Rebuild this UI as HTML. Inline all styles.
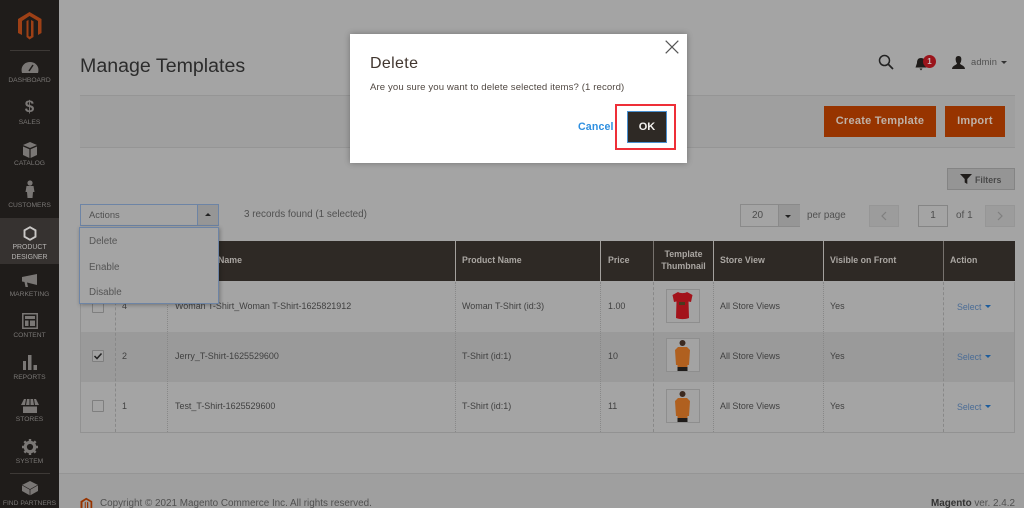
<!DOCTYPE html>
<html><head><meta charset="utf-8"><style>
html,body{margin:0;padding:0;width:1024px;height:508px;overflow:hidden;background:#a4a4a4}
#r{position:relative;width:1024px;height:508px;overflow:hidden;background:#a4a4a4;font-family:"Liberation Sans",sans-serif;color:#444}
.a,.t,svg.i{position:absolute}
.t{white-space:nowrap;font-size:9px;line-height:12px}
.n{left:0;width:59px;text-align:center;font-size:6.7px;line-height:9px;color:#7a7775}
.h{color:#aaa6a2;font-weight:bold;font-size:8.8px}
.c{color:#404040;font-size:8.95px}
.sel{color:#4a6c96;font-size:8.8px}
.v{top:282px;height:150px;width:0;border-left:1px dashed #888}
.hv{top:241px;height:40px;width:1px;background:#a3a09d}
.cb{left:92px;width:10px;height:10px;border:1px solid #7f7f7f;background:#a4a4a4;border-radius:1px}
.th{left:666px;width:32px;height:32px;border:1px solid #8e8e8e;background:#a3a3a3}
</style></head><body><div id="r">

<!-- sidebar -->
<div class="a" style="left:0;top:0;width:59px;height:508px;background:#1f1c1a"></div>
<div class="a" style="left:0;top:218px;width:59px;height:46px;background:#363230"></div>
<div class="a" style="left:10px;top:50px;width:40px;height:1px;background:#3d3936"></div>
<div class="a" style="left:10px;top:473px;width:40px;height:1px;background:#3d3936"></div>
<svg class="i" style="left:17px;top:11px" width="26" height="29" viewBox="0 0 26 29"><path d="M12.5 1 L24.5 8 V22 L21 24 V10 L12.5 5 L5 10 V24 L1 22 V8 Z M9.5 10 L11.5 9 V25 L12.5 25.6 L14 25 V9 L16.5 10.3 V26 L12.5 28.5 L9.5 26 Z" fill="#9d4016"/></svg>

<svg class="i" style="left:21px;top:61px" width="18" height="13" viewBox="0 0 18 13"><path d="M1 12 C-1 5 4 1 9 1 C14 1 19 5 17 12 Z" fill="#7a7775"/><path d="M8 10 L12 4" stroke="#1f1c1a" stroke-width="1.5"/></svg>
<div class="t n" style="top:76px">DASHBOARD</div>
<div class="t" style="left:0;width:59px;top:98px;text-align:center;font-size:17px;line-height:18px;font-weight:bold;color:#7a7775">$</div>
<div class="t n" style="top:118px">SALES</div>
<svg class="i" style="left:22px;top:142px" width="16" height="16" viewBox="0 0 16 16"><path d="M8 0 L15 3 L8 6 L1 3 Z M1 4.5 L7.4 7.3 V16 L1 13 Z M8.6 7.3 L15 4.5 V13 L8.6 16 Z" fill="#7a7775"/></svg>
<div class="t n" style="top:159px">CATALOG</div>
<svg class="i" style="left:25px;top:180px" width="10" height="18" viewBox="0 0 10 18"><circle cx="5" cy="3" r="2.6" fill="#7a7775"/><path d="M1.5 6 H8.5 L9.5 12 H8 L7.5 18 H2.5 L2 12 H.5 Z" fill="#7a7775"/></svg>
<div class="t n" style="top:201px">CUSTOMERS</div>
<svg class="i" style="left:23px;top:226px" width="14" height="15" viewBox="0 0 14 15"><path d="M7 1.2 L12.5 4.3 V10.7 L7 13.8 L1.5 10.7 V4.3 Z" fill="none" stroke="#c9c7c5" stroke-width="1.9"/></svg>
<div class="t n" style="top:243px;color:#b5b3b1;font-size:6.9px;line-height:10px">PRODUCT<br>DESIGNER</div>
<svg class="i" style="left:22px;top:274px" width="16" height="14" viewBox="0 0 16 14"><path d="M0 3 L15 0 V11 L5 8.5 L6 13 H3.5 L2.5 8 L0 7.5 Z" fill="#7a7775"/></svg>
<div class="t n" style="top:290px">MARKETING</div>
<svg class="i" style="left:22px;top:313px" width="16" height="16" viewBox="0 0 16 16"><path d="M.8.8 H15.2 V15.2 H.8 Z" fill="none" stroke="#7a7775" stroke-width="1.5"/><path d="M3 3 H13 V6 H3 Z M3 7.5 H6.5 V13 H3 Z M8 7.5 H13 V13 H8 Z" fill="#7a7775"/></svg>
<div class="t n" style="top:331px">CONTENT</div>
<svg class="i" style="left:23px;top:355px" width="14" height="15" viewBox="0 0 14 15"><path d="M0 6 H3 V15 H0 Z M5 0 H8.5 V15 H5 Z M10.5 10 H14 V15 H10.5 Z" fill="#7a7775"/></svg>
<div class="t n" style="top:373px">REPORTS</div>
<svg class="i" style="left:21px;top:399px" width="18" height="14" viewBox="0 0 18 14"><path d="M3 0 H15 L18 6 H0 Z M2 7.5 H16 V14 H2 Z" fill="#7a7775"/><path d="M5.5 0 L4.5 6 M9 0 V6 M12.5 0 L13.5 6" stroke="#1f1c1a"/></svg>
<div class="t n" style="top:415px">STORES</div>
<svg class="i" style="left:22px;top:439px" width="16" height="16" viewBox="0 0 16 16"><circle cx="8" cy="8" r="4.7" fill="none" stroke="#7a7775" stroke-width="3.2"/><path d="M8 0 V16 M0 8 H16 M2.3 2.3 L13.7 13.7 M13.7 2.3 L2.3 13.7" stroke="#7a7775" stroke-width="2.4" stroke-dasharray="2.6 10.8"/></svg>
<div class="t n" style="top:457px">SYSTEM</div>
<svg class="i" style="left:21px;top:480px" width="18" height="16" viewBox="0 0 18 16"><path d="M9 1 L17 5 V11 L9 15.5 L1 11 V5 Z" fill="#7a7775"/><path d="M1 5 L9 9.5 L17 5 M9 9.5 V15.5" stroke="#1f1c1a" stroke-width=".7" fill="none"/></svg>
<div class="t n" style="top:499px">FIND PARTNERS</div>

<!-- header -->
<div class="t" style="left:80px;top:54px;font-size:19.6px;line-height:24px;color:#2c2c2c">Manage Templates</div>
<svg class="i" style="left:878px;top:54px" width="16" height="16" viewBox="0 0 16 16"><circle cx="6.5" cy="6.5" r="5" fill="none" stroke="#222" stroke-width="1.5"/><path d="M10.2 10.2 L15 15" stroke="#222" stroke-width="1.7"/></svg>
<svg class="i" style="left:915px;top:57px" width="12" height="14" viewBox="0 0 12 14"><path d="M6 1 C9 1 10 3 10 6 L11.5 10.5 H.5 L2 6 C2 3 3 1 6 1 Z M4.5 11.5 H7.5 L6 13.5 Z" fill="#1f1c1a"/></svg>
<div class="a" style="left:923px;top:55px;width:13px;height:13px;border-radius:50%;background:#9a141b;color:#c9b9b9;font-size:8px;font-weight:bold;line-height:13px;text-align:center">1</div>
<svg class="i" style="left:952px;top:56px" width="13" height="13" viewBox="0 0 13 13"><path d="M6.5 0 C9 0 9.5 2 9.3 4 C9.1 6 8.3 7 8 7.5 C8.2 9 13 9.5 13 13 H0 C0 9.5 4.8 9 5 7.5 C4.7 7 3.9 6 3.7 4 C3.5 2 4 0 6.5 0 Z" fill="#1f1c1a"/></svg>
<div class="t" style="left:971px;top:56px;font-size:9.3px;color:#505050;letter-spacing:.15px">admin</div>
<div class="a" style="left:1001px;top:61px;border:3px solid transparent;border-top-color:#333;border-bottom:0"></div>

<!-- toolbar band -->
<div class="a" style="left:80px;top:95px;width:935px;height:53px;background:#9f9f9f;border-top:1px solid #959595;border-bottom:1px solid #959595;box-sizing:border-box"></div>
<div class="a" style="left:824px;top:106px;width:112px;height:31px;background:#973400"></div>
<div class="t" style="left:824px;top:115px;width:112px;text-align:center;font-size:11px;line-height:13px;font-weight:bold;color:#bfb2a8;letter-spacing:.25px">Create Template</div>
<div class="a" style="left:945px;top:106px;width:60px;height:31px;background:#973400"></div>
<div class="t" style="left:945px;top:115px;width:60px;text-align:center;font-size:11px;line-height:13px;font-weight:bold;color:#bfb2a8;letter-spacing:.25px">Import</div>

<div class="a" style="left:947px;top:168px;width:68px;height:22px;background:#959595;border:1px solid #848484;box-sizing:border-box"></div>
<svg class="i" style="left:960px;top:174px" width="12" height="10" viewBox="0 0 12 10"><path d="M0 0 H12 L7.3 5 V10 L4.7 8.5 V5 Z" fill="#1f1c1a"/></svg>
<div class="t" style="left:975px;top:174px;font-size:8.8px;font-weight:bold;color:#4a4a4a">Filters</div>

<!-- actions -->
<div class="a" style="left:80px;top:204px;width:139px;height:22px;border:1px solid #6d84a5;box-sizing:border-box;background:#a4a4a4"></div>
<div class="a" style="left:197px;top:205px;width:1px;height:20px;background:#6d84a5"></div>
<div class="a" style="left:198px;top:205px;width:20px;height:20px;background:#969696"></div>
<div class="a" style="left:205px;top:213px;border:3px solid transparent;border-bottom-color:#222;border-top:0"></div>
<div class="t c" style="left:89px;top:209px;font-size:9.4px;color:#505050">Actions</div>
<div class="t" style="left:244px;top:209px;font-size:9.9px;color:#505050">3 records found (1 selected)</div>

<!-- pager -->
<div class="a" style="left:740px;top:204px;width:60px;height:23px;background:#a4a4a4;border:1px solid #8a8a8a;box-sizing:border-box"></div>
<div class="a" style="left:778px;top:205px;width:21px;height:21px;background:#969696;border-left:1px solid #8a8a8a"></div>
<div class="a" style="left:785px;top:215px;border:3px solid transparent;border-top-color:#222;border-bottom:0"></div>
<div class="t" style="left:752px;top:210px;font-size:10px;color:#4c4c4c">20</div>
<div class="t" style="left:807px;top:210px;font-size:9.8px;color:#505050">per page</div>
<div class="a" style="left:869px;top:205px;width:30px;height:22px;background:#9c9c9c;border:1px solid #969696;box-sizing:border-box"></div>
<svg class="i" style="left:880px;top:211px" width="7" height="10" viewBox="0 0 7 10"><path d="M6 1 L2 5 L6 9" fill="none" stroke="#7f7f7f" stroke-width="1.2"/></svg>
<div class="a" style="left:918px;top:205px;width:30px;height:22px;background:#a4a4a4;border:1px solid #858585;box-sizing:border-box"></div>
<div class="t" style="left:918px;top:210px;width:30px;text-align:center;font-size:10px;color:#4c4c4c">1</div>
<div class="t" style="left:956px;top:210px;font-size:10px;color:#505050">of 1</div>
<div class="a" style="left:985px;top:205px;width:30px;height:22px;background:#9c9c9c;border:1px solid #969696;box-sizing:border-box"></div>
<svg class="i" style="left:997px;top:211px" width="7" height="10" viewBox="0 0 7 10"><path d="M1 1 L5 5 L1 9" fill="none" stroke="#7f7f7f" stroke-width="1.2"/></svg>

<!-- table -->
<div class="a" style="left:80px;top:282px;width:935px;height:151px;border:1px solid #929292;border-top:0;box-sizing:border-box"></div>
<div class="a" style="left:81px;top:332px;width:933px;height:50px;background:#9a9a9a"></div>
<div class="a" style="left:80px;top:241px;width:935px;height:40px;background:#2e2925"></div>
<div class="a hv" style="left:167px"></div><div class="a hv" style="left:455px"></div><div class="a hv" style="left:600px"></div><div class="a hv" style="left:653px;background:#77726e"></div><div class="a hv" style="left:713px"></div><div class="a hv" style="left:823px"></div><div class="a hv" style="left:943px;background:#77726e"></div>
<div class="a v" style="left:115px"></div><div class="a v" style="left:167px;border-left-style:dotted"></div><div class="a v" style="left:455px;border-left-style:dotted"></div><div class="a v" style="left:600px;border-left-style:dotted"></div><div class="a v" style="left:653px"></div><div class="a v" style="left:713px;border-left-style:dotted"></div><div class="a v" style="left:823px;border-left-style:dotted"></div><div class="a v" style="left:943px"></div>

<div class="t h" style="left:218px;top:254px">Name</div>
<div class="t h" style="left:462px;top:254px">Product Name</div>
<div class="t h" style="left:608px;top:254px">Price</div>
<div class="t h" style="left:654px;top:248px;width:59px;text-align:center;line-height:12px">Template<br>Thumbnail</div>
<div class="t h" style="left:720px;top:254px">Store View</div>
<div class="t h" style="left:830px;top:254px">Visible on Front</div>
<div class="t h" style="left:950px;top:254px">Action</div>

<!-- rows -->
<div class="a cb" style="top:301px"></div>
<div class="t c" style="left:122px;top:300px">4</div>
<div class="t c" style="left:175px;top:300px">Woman T-Shirt_Woman T-Shirt-1625821912</div>
<div class="t c" style="left:462px;top:300px">Woman T-Shirt (id:3)</div>
<div class="t c" style="left:608px;top:300px">1.00</div>
<div class="a th" style="top:289px"></div>
<svg class="i" style="left:672px;top:291px" width="21" height="29" viewBox="0 0 21 29"><path d="M6 1 C8 2.5 13 2.5 15 1 L20.5 4 L19 11 L16.5 10.5 L17 27 C13 28.5 8 28.5 4 27 L4.5 10.5 L2 11 L.5 4 Z" fill="#a3131b"/><path d="M7 11 H13 V14 H7 Z" fill="#4a3a20"/></svg>
<div class="t c" style="left:720px;top:300px">All Store Views</div>
<div class="t c" style="left:830px;top:300px">Yes</div>
<div class="t sel" style="left:957px;top:301px">Select</div>
<div class="a" style="left:985px;top:305px;border:3px solid transparent;border-top-color:#1c5c9c;border-bottom:0"></div>

<div class="a cb" style="top:350px;background:#a1a1a1"></div>
<svg class="i" style="left:93px;top:351px" width="10" height="10" viewBox="0 0 10 10"><path d="M1.5 5 L4 7.5 L8.5 2.5" fill="none" stroke="#222" stroke-width="1.5"/></svg>
<div class="t c" style="left:122px;top:350px">2</div>
<div class="t c" style="left:175px;top:350px">Jerry_T-Shirt-1625529600</div>
<div class="t c" style="left:462px;top:350px">T-Shirt (id:1)</div>
<div class="t c" style="left:608px;top:350px">10</div>
<div class="a th" style="top:338px"></div>
<svg class="i" style="left:674px;top:339px" width="17" height="33" viewBox="0 0 17 33"><circle cx="8.5" cy="4" r="3" fill="#3c2a20"/><path d="M4 8 H13 L16 11 L15 26 H13.5 V30 H3.5 V26 H2 L1 11 Z" fill="#b0601f"/><path d="M3.5 28 H13.5 V32 H3.5 Z" fill="#1f1c1a"/></svg>
<div class="t c" style="left:720px;top:350px">All Store Views</div>
<div class="t c" style="left:830px;top:350px">Yes</div>
<div class="t sel" style="left:957px;top:351px">Select</div>
<div class="a" style="left:985px;top:355px;border:3px solid transparent;border-top-color:#1c5c9c;border-bottom:0"></div>

<div class="a cb" style="top:400px"></div>
<div class="t c" style="left:122px;top:400px">1</div>
<div class="t c" style="left:175px;top:400px">Test_T-Shirt-1625529600</div>
<div class="t c" style="left:462px;top:400px">T-Shirt (id:1)</div>
<div class="t c" style="left:608px;top:400px">11</div>
<div class="a th" style="top:389px"></div>
<svg class="i" style="left:674px;top:390px" width="17" height="33" viewBox="0 0 17 33"><circle cx="8.5" cy="4" r="3" fill="#3c2a20"/><path d="M4 8 H13 L16 11 L15 26 H13.5 V30 H3.5 V26 H2 L1 11 Z" fill="#b0601f"/><path d="M3.5 28 H13.5 V32 H3.5 Z" fill="#1f1c1a"/></svg>
<div class="t c" style="left:720px;top:400px">All Store Views</div>
<div class="t c" style="left:830px;top:400px">Yes</div>
<div class="t sel" style="left:957px;top:401px">Select</div>
<div class="a" style="left:985px;top:405px;border:3px solid transparent;border-top-color:#1c5c9c;border-bottom:0"></div>

<!-- dropdown -->
<div class="a" style="left:79px;top:227px;width:140px;height:77px;background:#a4a4a4;border:1px solid #6d84a5;box-sizing:border-box;box-shadow:1px 1px 4px rgba(0,0,0,.3)"></div>
<div class="t" style="left:89px;top:236px;font-size:9.8px;color:#555">Delete</div>
<div class="t" style="left:89px;top:262px;font-size:9.8px;color:#555">Enable</div>
<div class="t" style="left:89px;top:287px;font-size:9.8px;color:#555">Disable</div>

<!-- footer -->
<div class="a" style="left:59px;top:473px;width:965px;height:35px;background:#9f9f9f;border-top:1px solid #959595;box-sizing:border-box"></div>
<svg class="i" style="left:80px;top:497px" width="13" height="15" viewBox="0 0 26 29"><path d="M12.5 1 L24.5 8 V22 L21 24 V10 L12.5 5 L5 10 V24 L1 22 V8 Z M9.5 10 L11.5 9 V25 L12.5 25.6 L14 25 V9 L16.5 10.3 V26 L12.5 28.5 L9.5 26 Z" fill="#973400"/></svg>
<div class="t" style="left:100px;top:498px;font-size:9.9px;color:#505050">Copyright © 2021 Magento Commerce Inc. All rights reserved.</div>
<div class="t" style="left:931px;top:498px;font-size:9.9px;color:#505050"><b style="color:#333">Magento</b> ver. 2.4.2</div>

<!-- modal -->
<div class="a" style="left:350px;top:34px;width:337px;height:129px;background:#fff;box-shadow:0 0 6px rgba(0,0,0,.3)"></div>
<svg class="i" style="left:665px;top:40px" width="14" height="14" viewBox="0 0 14 14"><path d="M.7.7 L13.3 13.3 M13.3.7 L.7 13.3" stroke="#555" stroke-width="1.2"/></svg>
<div class="t" style="left:370px;top:54px;font-size:16px;line-height:20px;color:#41362f;letter-spacing:.35px">Delete</div>
<div class="t" style="left:370px;top:82px;font-size:9.6px;color:#514943;letter-spacing:.1px">Are you sure you want to delete selected items? (1 record)</div>
<div class="t" style="left:578px;top:120px;font-size:10.6px;line-height:14px;font-weight:bold;color:#2e8fe0;letter-spacing:.15px">Cancel</div>
<div class="a" style="left:615px;top:104px;width:61px;height:46px;border:2px solid #ee2f38;box-sizing:border-box"></div>
<div class="a" style="left:627px;top:111px;width:40px;height:32px;background:#2e2925;border:1px solid #4a90d0;box-sizing:border-box"></div>
<div class="t" style="left:627px;top:120px;width:40px;text-align:center;font-size:11px;line-height:14px;font-weight:bold;color:#f3f1ef">OK</div>

</div></body></html>
